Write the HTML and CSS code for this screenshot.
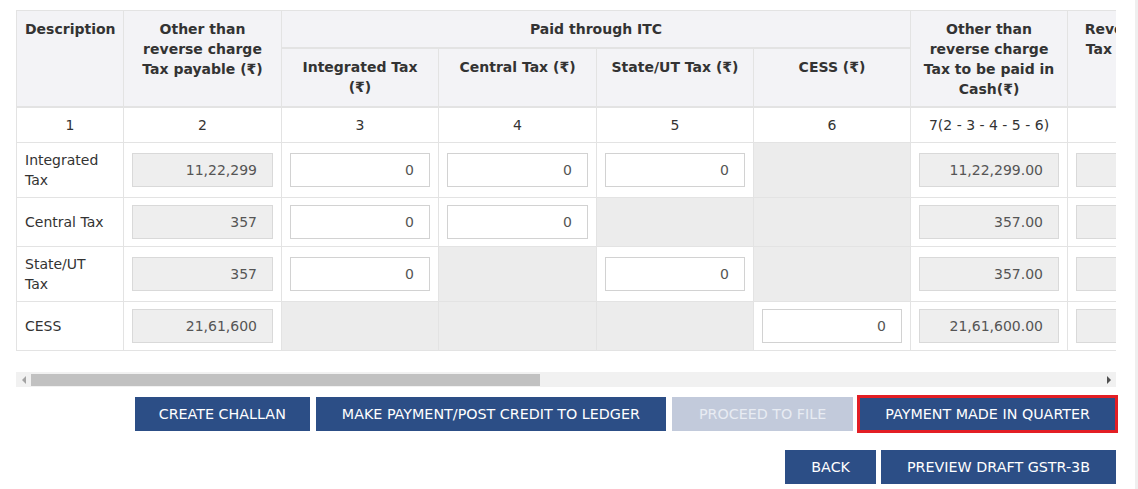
FILE: index.html
```html
<!DOCTYPE html>
<html lang="en">
<head>
<meta charset="utf-8">
<title>Payment of Tax</title>
<link rel="stylesheet" href="styles.css">
</head>
<body>
<div class="page">
  <div class="table-wrap">
    <table class="tax-table">
      <colgroup>
        <col class="c-desc">
        <col class="c-wide"><col class="c-std"><col class="c-wide">
        <col class="c-std"><col class="c-std"><col class="c-std"><col class="c-std">
        <col class="c-std"><col class="c-std"><col class="c-std"><col class="c-std">
        <col class="c-std"><col class="c-std"><col class="c-std">
      </colgroup>
      <thead>
        <tr>
          <th rowspan="2">Description</th>
          <th rowspan="2">Other than reverse charge Tax payable (₹)</th>
          <th colspan="4">Paid through ITC</th>
          <th rowspan="2">Other than reverse charge Tax to be paid in Cash(₹)</th>
          <th rowspan="2">Reverse charge Tax payable (₹)</th>
          <th rowspan="2">Reverse charge Tax to be paid in Cash(₹)</th>
          <th rowspan="2">Interest payable (₹)</th>
          <th rowspan="2">Interest to be paid in Cash(₹)</th>
          <th rowspan="2">Late Fee payable (₹)</th>
          <th rowspan="2">Late Fee to be paid in Cash(₹)</th>
          <th rowspan="2">Utilizable Cash balance (₹)</th>
          <th rowspan="2">Additional Cash required (₹)</th>
        </tr>
        <tr>
          <th>Integrated Tax (₹)</th>
          <th>Central Tax (₹)</th>
          <th>State/UT Tax (₹)</th>
          <th>CESS (₹)</th>
        </tr>
      </thead>
      <tbody>
        <tr class="num-row">
          <td>1</td><td>2</td><td>3</td><td>4</td><td>5</td><td>6</td><td>7(2 - 3 - 4 - 5 - 6)</td>
          <td>8</td><td>9</td><td>10</td><td>11</td><td>12</td><td>13</td><td>14</td><td>15</td>
        </tr>
        <tr>
          <td class="label">Integrated Tax</td>
          <td><input class="field ro" value="11,22,299" readonly></td>
          <td><input class="field" value="0"></td>
          <td><input class="field" value="0"></td>
          <td><input class="field" value="0"></td>
          <td class="off"></td>
          <td><input class="field ro" value="11,22,299.00" readonly></td>
          <td><input class="field ro" value="" readonly></td>
          <td><input class="field ro" value="" readonly></td>
          <td><input class="field ro" value="" readonly></td>
          <td><input class="field ro" value="" readonly></td>
          <td><input class="field ro" value="" readonly></td>
          <td><input class="field ro" value="" readonly></td>
          <td><input class="field ro" value="" readonly></td>
          <td><input class="field ro" value="" readonly></td>
        </tr>
        <tr>
          <td class="label">Central Tax</td>
          <td><input class="field ro" value="357" readonly></td>
          <td><input class="field" value="0"></td>
          <td><input class="field" value="0"></td>
          <td class="off"></td>
          <td class="off"></td>
          <td><input class="field ro" value="357.00" readonly></td>
          <td><input class="field ro" value="" readonly></td>
          <td><input class="field ro" value="" readonly></td>
          <td><input class="field ro" value="" readonly></td>
          <td><input class="field ro" value="" readonly></td>
          <td><input class="field ro" value="" readonly></td>
          <td><input class="field ro" value="" readonly></td>
          <td><input class="field ro" value="" readonly></td>
          <td><input class="field ro" value="" readonly></td>
        </tr>
        <tr>
          <td class="label">State/UT Tax</td>
          <td><input class="field ro" value="357" readonly></td>
          <td><input class="field" value="0"></td>
          <td class="off"></td>
          <td><input class="field" value="0"></td>
          <td class="off"></td>
          <td><input class="field ro" value="357.00" readonly></td>
          <td><input class="field ro" value="" readonly></td>
          <td><input class="field ro" value="" readonly></td>
          <td><input class="field ro" value="" readonly></td>
          <td><input class="field ro" value="" readonly></td>
          <td><input class="field ro" value="" readonly></td>
          <td><input class="field ro" value="" readonly></td>
          <td><input class="field ro" value="" readonly></td>
          <td><input class="field ro" value="" readonly></td>
        </tr>
        <tr>
          <td class="label">CESS</td>
          <td><input class="field ro" value="21,61,600" readonly></td>
          <td class="off"></td>
          <td class="off"></td>
          <td class="off"></td>
          <td><input class="field" value="0"></td>
          <td><input class="field ro" value="21,61,600.00" readonly></td>
          <td><input class="field ro" value="" readonly></td>
          <td><input class="field ro" value="" readonly></td>
          <td><input class="field ro" value="" readonly></td>
          <td><input class="field ro" value="" readonly></td>
          <td><input class="field ro" value="" readonly></td>
          <td><input class="field ro" value="" readonly></td>
          <td><input class="field ro" value="" readonly></td>
          <td><input class="field ro" value="" readonly></td>
        </tr>
      </tbody>
    </table>
  </div>

  <div class="hscroll">
    <div class="sb-btn"><span class="arrow-left"></span></div>
    <div class="sb-track"><div class="sb-thumb"></div></div>
    <div class="sb-btn"><span class="arrow-right"></span></div>
  </div>

  <div class="actions">
    <button class="btn btn-narrow" type="button">CREATE CHALLAN</button>
    <button class="btn" type="button">MAKE PAYMENT/POST CREDIT TO LEDGER</button>
    <button class="btn btn-disabled" type="button" disabled>PROCEED TO FILE</button>
    <button class="btn btn-focus" type="button">PAYMENT MADE IN QUARTER</button>
  </div>

  <div class="actions actions-secondary">
    <button class="btn" type="button">BACK</button>
    <button class="btn" type="button">PREVIEW DRAFT GSTR-3B</button>
  </div>
</div>
</body>
</html>
```

FILE: styles.css
```css
* {
  box-sizing: border-box;
}

html, body {
  margin: 0;
  padding: 0;
  background: #ffffff;
}

body {
  font-family: "DejaVu Sans", Verdana, sans-serif;
  font-size: 14px;
  line-height: 20px;
  color: #333333;
}

.page {
  width: 1138px;
  min-height: 489px;
  padding: 10px 0 0 16px;
  border-right: 3px solid #efefef;
}

.table-wrap {
  width: 1100px;
  overflow: hidden;
}

.tax-table {
  border-collapse: collapse;
  table-layout: fixed;
  width: 2307px;
  margin-bottom: 21px;
}

.c-desc { width: 107px; }
.c-wide { width: 158px; }
.c-std { width: 157px; }

.tax-table th,
.tax-table td {
  border: 1px solid #e3e3e3;
  padding: 7px 8px;
}

.tax-table th {
  background: #f3f3f6;
  font-weight: bold;
  text-align: center;
  vertical-align: top;
  color: #333333;
  border-bottom-width: 2px;
  padding: 8px 8px 7px;
}

.tax-table td {
  vertical-align: middle;
  background: #ffffff;
}

.num-row td {
  text-align: center;
}

.tax-table td.label {
  text-align: left;
  padding-right: 12px;
}

.tax-table td.off {
  background: #ececec;
}

.field {
  display: block;
  width: 100%;
  height: 34px;
  padding: 6px 15px 6px 12px;
  border: 1px solid #d2d2d2;
  border-radius: 0;
  background: #ffffff;
  color: #555555;
  font-family: "DejaVu Sans", Verdana, sans-serif;
  font-size: 14px;
  line-height: 20px;
  text-align: right;
  outline: none;
}

.field.ro {
  background: #eeeeee;
  border-color: #d9d9d9;
}

.hscroll {
  width: 1100px;
  height: 15px;
  background: #f1f1f1;
  display: flex;
  align-items: stretch;
}

.sb-btn {
  width: 15px;
  flex: 0 0 15px;
  display: flex;
  align-items: center;
  justify-content: center;
}

.arrow-left {
  width: 0;
  height: 0;
  border-top: 4px solid transparent;
  border-bottom: 4px solid transparent;
  border-right: 4px solid #a3a3a3;
}

.arrow-right {
  width: 0;
  height: 0;
  border-top: 4px solid transparent;
  border-bottom: 4px solid transparent;
  border-left: 4px solid #505050;
}

.sb-track {
  flex: 1;
  display: flex;
  align-items: center;
}

.sb-thumb {
  width: 509px;
  height: 12px;
  background: #c1c1c1;
}

.actions {
  width: 1100px;
  display: flex;
  justify-content: flex-end;
  gap: 6px;
  margin-top: 10px;
}

.actions-secondary {
  gap: 5px;
  margin-top: 19px;
}

.btn {
  height: 34px;
  padding: 0 26px;
  border: none;
  border-radius: 0;
  background: #2c4e86;
  color: #ffffff;
  font-family: "DejaVu Sans", Verdana, sans-serif;
  font-size: 14.3px;
  line-height: 20px;
  white-space: nowrap;
}

.btn-narrow {
  padding: 0 24px;
}

.btn-disabled {
  background: #c2cadb;
  color: #e8ecf3;
  padding: 0 27px;
}

.btn-focus {
  outline: 2px solid #e31e24;
  box-shadow: inset 0 0 0 1px #e31e24;
}
```
